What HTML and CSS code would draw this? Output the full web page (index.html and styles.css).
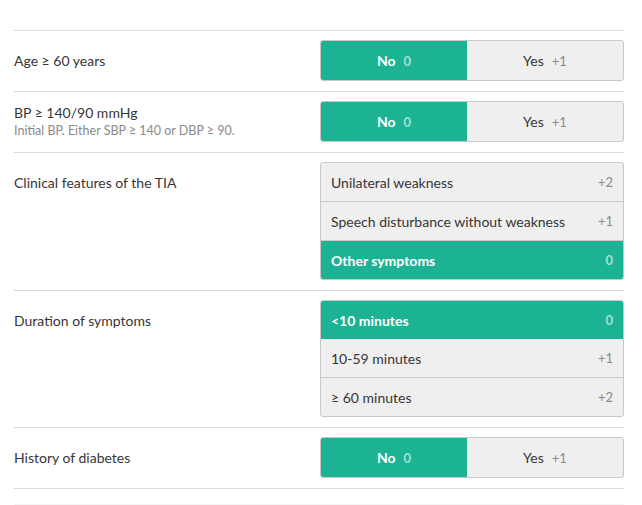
FILE: index.html
```html
<!DOCTYPE html>
<html>
<head>
<meta charset="utf-8">
<link rel="stylesheet" href="styles.css">
</head>
<body>
<div class="calc">
  <div class="row">
    <div class="label"><div class="title">Age ≥ 60 years</div></div>
    <div class="toggle">
      <div class="opt on"><span class="txt">No</span><span class="pts">0</span></div>
      <div class="opt"><span class="txt">Yes</span><span class="pts">+1</span></div>
    </div>
  </div>
  <div class="row">
    <div class="label"><div class="title">BP ≥ 140/90 mmHg</div><div class="sub">Initial BP. Either SBP ≥ 140 or DBP ≥ 90.</div></div>
    <div class="toggle">
      <div class="opt on"><span class="txt">No</span><span class="pts">0</span></div>
      <div class="opt"><span class="txt">Yes</span><span class="pts">+1</span></div>
    </div>
  </div>
  <div class="row">
    <div class="label"><div class="title">Clinical features of the TIA</div></div>
    <div class="list">
      <div class="item"><span class="txt">Unilateral weakness</span><span class="pts">+2</span></div>
      <div class="item"><span class="txt">Speech disturbance without weakness</span><span class="pts">+1</span></div>
      <div class="item on"><span class="txt">Other symptoms</span><span class="pts">0</span></div>
    </div>
  </div>
  <div class="row">
    <div class="label"><div class="title">Duration of symptoms</div></div>
    <div class="list">
      <div class="item on"><span class="txt">&lt;10 minutes</span><span class="pts">0</span></div>
      <div class="item"><span class="txt">10-59 minutes</span><span class="pts">+1</span></div>
      <div class="item"><span class="txt">≥ 60 minutes</span><span class="pts">+2</span></div>
    </div>
  </div>
  <div class="row">
    <div class="label"><div class="title">History of diabetes</div></div>
    <div class="toggle">
      <div class="opt on"><span class="txt">No</span><span class="pts">0</span></div>
      <div class="opt"><span class="txt">Yes</span><span class="pts">+1</span></div>
    </div>
  </div>
  <div class="end"></div>
  <div class="faint"></div>
</div>
</body>
</html>
```
FILE: styles.css
```css
html, body {
  margin: 0;
  padding: 0;
  background: #fff;
}
body {
  font-family: Lato, "Liberation Sans", sans-serif;
  color: #363636;
}
.calc {
  width: 610px;
  margin: 30px 0 0 14px;
}
.row {
  display: flex;
  align-items: flex-start;
  border-top: 1px solid #d9d9d9;
  padding: 9px 0 10px;
}
.label {
  flex: 0 0 306px;
  min-height: 41px;
  display: flex;
  flex-direction: column;
  justify-content: center;
}
.title {
  font-size: 14px;
  line-height: 19px;
}
.sub {
  font-size: 12.5px;
  line-height: 18px;
  color: #8a8a8a;
}
.toggle {
  flex: 1;
  display: flex;
  height: 41px;
  box-sizing: border-box;
  border: 1px solid #c9c9c9;
  border-radius: 3px;
  overflow: hidden;
  background: #efefef;
}
.opt {
  flex: 1;
  display: flex;
  align-items: center;
  justify-content: center;
  font-size: 14px;
  color: #363636;
}
.opt.on {
  flex: 0 0 146px;
  background: #1bb394;
  color: #fff;
  font-weight: 700;
}
.opt .pts {
  margin-left: 8px;
  font-size: 13px;
  color: #8a8a8a;
}
.opt.on .pts {
  color: rgba(255,255,255,0.6);
}
.list {
  flex: 1;
  border: 1px solid #c9c9c9;
  border-radius: 3px;
  overflow: hidden;
  background: #efefef;
}
.item {
  height: 38px;
  display: flex;
  align-items: center;
  justify-content: space-between;
  padding: 0 10px;
  font-size: 14px;
  color: #363636;
}
.item + .item {
  border-top: 1px solid #c9c9c9;
}
.item .pts {
  font-size: 13px;
  color: #8a8a8a;
}
.item.on {
  background: #1bb394;
  color: #fff;
  font-weight: 700;
}
.item.on .pts {
  color: rgba(255,255,255,0.6);
}
.item.on + .item {
  border-top: none;
}
.end {
  border-top: 1px solid #d9d9d9;
}
.faint {
  margin-top: 15px;
  border-top: 1px solid #f5f5f5;
}
```
